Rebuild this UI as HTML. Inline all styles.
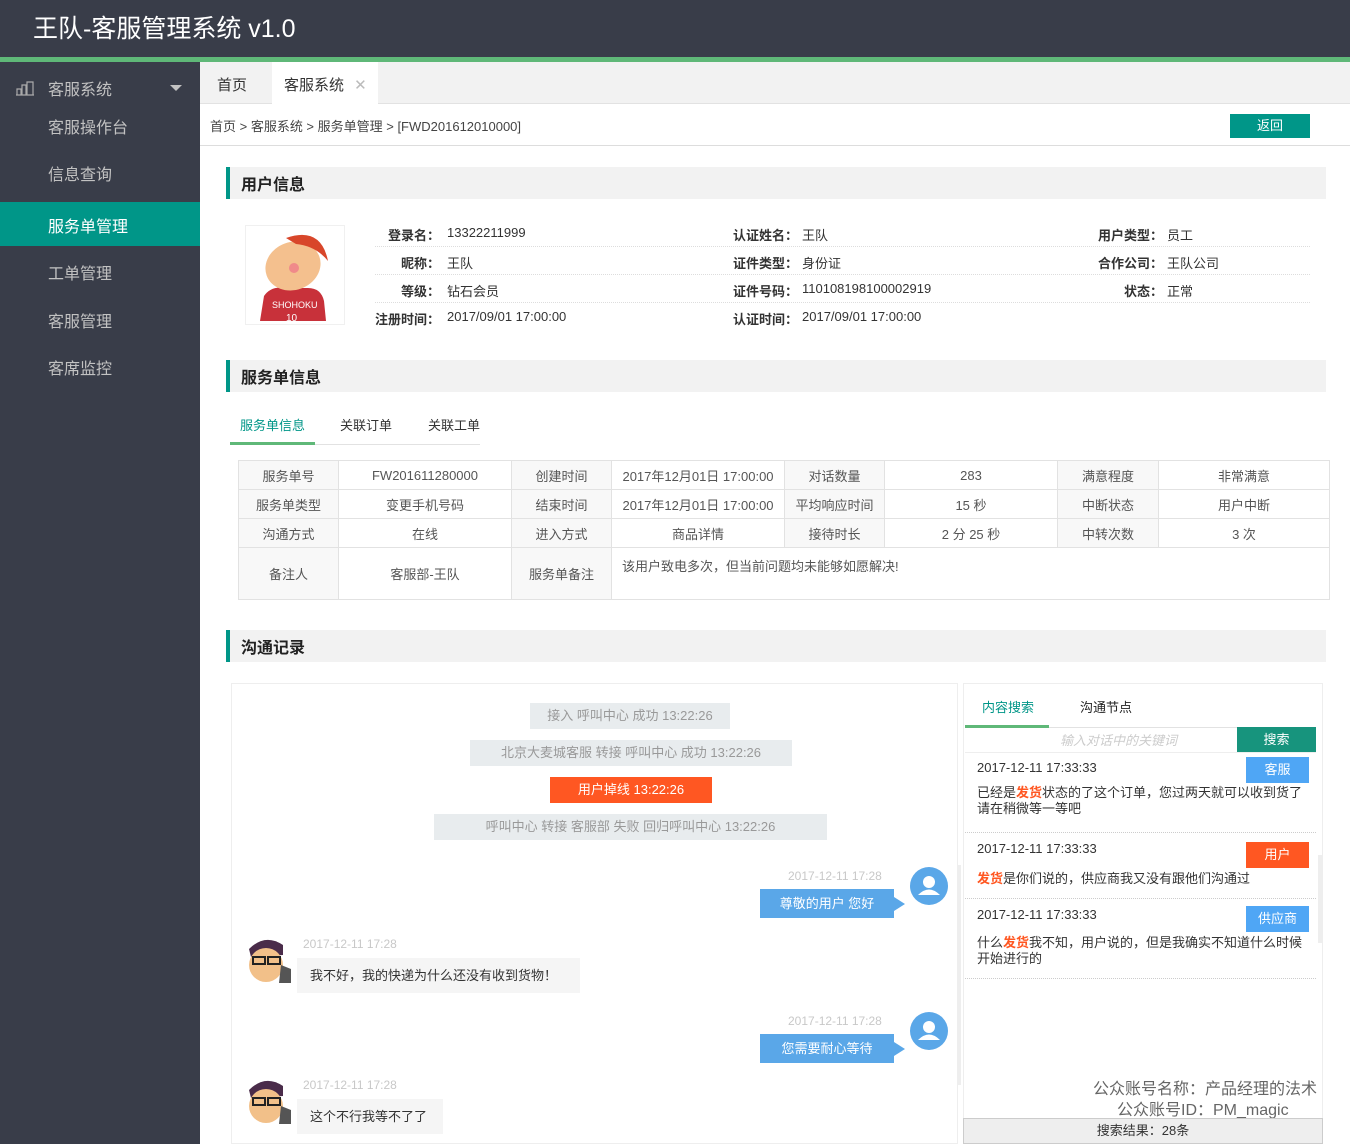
<!DOCTYPE html>
<html><head><meta charset="utf-8"><style>
*{margin:0;padding:0;box-sizing:border-box}
body{width:1350px;height:1144px;overflow:hidden;background:#fff;font-family:"Liberation Sans","Noto Sans CJK SC",sans-serif;font-size:13px;color:#333;position:relative}
.a{position:absolute}
.hdr{left:0;top:0;width:1350px;height:57px;background:#393d49;color:#fff;font-size:25px;padding:9px 0 0 33px}
.gl{left:0;top:57px;width:1350px;height:5px;background:#5fb878}
.side{left:0;top:62px;width:200px;height:1082px;background:#393d49}
.act{left:0;top:202px;width:200px;height:44px;background:#009688}
.tabs{left:200px;top:62px;width:1150px;height:42px;background:#f2f2f2;border-bottom:1px solid #e2e2e2}
.sec{left:226px;width:1100px;height:32px;background:#f2f2f2;border-left:4px solid #009688;font-size:16px;font-weight:bold;padding:4px 0 0 11px;color:#222}
.lb{font-weight:bold}
.row{left:375px;width:935px;border-bottom:1px dotted #ddd;height:28px}
.r{position:absolute;white-space:nowrap}
table{border-collapse:collapse;position:absolute;left:238px;top:460px;width:1092px;font-size:13px;color:#555}
td{border:1px solid #e2e2e2;text-align:center;height:29px}
td.g{background:#f8f8f8}
.pill{position:absolute;background:#e8ecee;color:#999;text-align:center;height:26px;line-height:26px;font-size:13px}
.tm{position:absolute;color:#c8c8c8;font-size:12px}
.bb{position:absolute;background:#5aa7e8;color:#fff;height:29px;line-height:29px;text-align:center;font-size:13px}
.bb:after{content:"";position:absolute;right:-11px;top:8px;border-left:11px solid #5aa7e8;border-top:7px solid transparent;border-bottom:7px solid transparent}
.lbub{position:absolute;background:#f5f5f5;color:#333;height:35px;line-height:35px;padding-left:13px;font-size:13px}
.badge{position:absolute;left:1246px;width:63px;height:26px;line-height:26px;color:#fff;text-align:center;font-size:13px}
.it{position:absolute;left:965px;width:351px;border-bottom:1px dotted #ccc}
.it .d{position:absolute;left:12px;top:8px;font-size:13px}
.it .t{position:absolute;left:12px;top:33px;width:335px;font-size:13px;line-height:16px}
.o{color:#ff5722;font-weight:bold}
</style></head><body>
<div class="a hdr">王队-客服管理系统 v1.0</div>
<div class="a gl"></div>
<div class="a side"></div>
<div class="a act"></div>
<svg class="a" style="left:15px;top:80px" width="20" height="16"><path d="M1 15 H19 M2 15 V9 H6 V15 M7 15 V5 H11 V15 M12 15 V2 H18 V15" fill="none" stroke="#aaa" stroke-width="1.2"/></svg>
<div class="a" style="left:48px;top:76px;color:#c2c2c2;font-size:16px">客服系统</div>
<div class="a" style="left:170px;top:85px;border-top:6px solid #c2c2c2;border-left:6px solid transparent;border-right:6px solid transparent"></div>
<div class="a" style="left:48px;top:114px;color:#c2c2c2;font-size:16px">客服操作台</div>
<div class="a" style="left:48px;top:161px;color:#c2c2c2;font-size:16px">信息查询</div>
<div class="a" style="left:48px;top:213px;color:#fff;font-size:16px">服务单管理</div>
<div class="a" style="left:48px;top:260px;color:#c2c2c2;font-size:16px">工单管理</div>
<div class="a" style="left:48px;top:308px;color:#c2c2c2;font-size:16px">客服管理</div>
<div class="a" style="left:48px;top:355px;color:#c2c2c2;font-size:16px">客席监控</div>

<div class="a tabs"></div>
<div class="a" style="left:217px;top:74px;font-size:15px">首页</div>
<div class="a" style="left:272px;top:62px;width:106px;height:43px;background:#fff"></div>
<div class="a" style="left:284px;top:74px;font-size:15px">客服系统 <span style="color:#bbb;margin-left:6px">✕</span></div>
<div class="a" style="left:200px;top:104px;width:1150px;height:42px;border-bottom:1px solid #ddd"></div>
<div class="a" style="left:210px;top:116px;font-size:13px;color:#444">首页 &gt; 客服系统 &gt; 服务单管理 &gt; [FWD201612010000]</div>
<div class="a" style="left:1230px;top:114px;width:80px;height:24px;background:#009688;color:#fff;text-align:center;line-height:24px;font-size:13px">返回</div>

<div class="a sec" style="top:167px">用户信息</div>
<div class="a" style="left:245px;top:225px;width:100px;height:100px;border:1px solid #f0f0f0">
<svg width="100" height="100" viewBox="0 0 100 100"><path d="M14 95 L18 70 Q25 60 38 62 L62 62 Q75 62 78 75 L80 95Z" fill="#c8313a"/><text x="26" y="82" font-size="9" fill="#fff" font-family="Liberation Sans">SHOHOKU</text><text x="40" y="95" font-size="10" fill="#fff">10</text><ellipse cx="47" cy="40" rx="28" ry="24" fill="#f4c08e" transform="rotate(-20 47 40)"/><path d="M40 12 Q75 0 82 35 Q70 20 50 18Z" fill="#d8462a"/><circle cx="48" cy="42" r="5" fill="#f08a8a"/></svg></div>
<div class="a row" style="top:219px"></div>
<div class="a row" style="top:247px"></div>
<div class="a row" style="top:275px"></div>
<div class="a" style="left:375px;top:219px;width:935px;height:112px">
<div class="r" style="right:870px;top:6px"><span class="lb">登录名：</span></div><div class="r" style="left:72px;top:6px">13322211999</div>
<div class="r" style="right:870px;top:34px"><span class="lb">昵称：</span></div><div class="r" style="left:72px;top:34px">王队</div>
<div class="r" style="right:870px;top:62px"><span class="lb">等级：</span></div><div class="r" style="left:72px;top:62px">钻石会员</div>
<div class="r" style="right:870px;top:90px"><span class="lb">注册时间：</span></div><div class="r" style="left:72px;top:90px">2017/09/01 17:00:00</div>
<div class="r" style="right:512px;top:6px"><span class="lb">认证姓名：</span></div><div class="r" style="left:427px;top:6px">王队</div>
<div class="r" style="right:512px;top:34px"><span class="lb">证件类型：</span></div><div class="r" style="left:427px;top:34px">身份证</div>
<div class="r" style="right:512px;top:62px"><span class="lb">证件号码：</span></div><div class="r" style="left:427px;top:62px">110108198100002919</div>
<div class="r" style="right:512px;top:90px"><span class="lb">认证时间：</span></div><div class="r" style="left:427px;top:90px">2017/09/01 17:00:00</div>
<div class="r" style="right:147px;top:6px"><span class="lb">用户类型：</span></div><div class="r" style="left:792px;top:6px">员工</div>
<div class="r" style="right:147px;top:34px"><span class="lb">合作公司：</span></div><div class="r" style="left:792px;top:34px">王队公司</div>
<div class="r" style="right:147px;top:62px"><span class="lb">状态：</span></div><div class="r" style="left:792px;top:62px">正常</div>
</div>

<div class="a sec" style="top:360px">服务单信息</div>
<div class="a" style="left:230px;top:444px;width:250px;height:1px;background:#e2e2e2"></div>
<div class="a" style="left:230px;top:442px;width:85px;height:3px;background:#5fb878"></div>
<div class="a" style="left:240px;top:415px;color:#009688">服务单信息</div>
<div class="a" style="left:340px;top:415px">关联订单</div>
<div class="a" style="left:428px;top:415px">关联工单</div>
<table>
<colgroup><col style="width:100px"><col style="width:173px"><col style="width:100px"><col style="width:173px"><col style="width:100px"><col style="width:173px"><col style="width:101px"><col></colgroup>
<tr><td class="g">服务单号</td><td>FW201611280000</td><td class="g">创建时间</td><td>2017年12月01日 17:00:00</td><td class="g">对话数量</td><td>283</td><td class="g">满意程度</td><td>非常满意</td></tr>
<tr><td class="g">服务单类型</td><td>变更手机号码</td><td class="g">结束时间</td><td>2017年12月01日 17:00:00</td><td class="g">平均响应时间</td><td>15 秒</td><td class="g">中断状态</td><td>用户中断</td></tr>
<tr><td class="g">沟通方式</td><td>在线</td><td class="g">进入方式</td><td>商品详情</td><td class="g">接待时长</td><td>2 分 25 秒</td><td class="g">中转次数</td><td>3 次</td></tr>
<tr><td class="g" style="height:52px">备注人</td><td>客服部-王队</td><td class="g">服务单备注</td><td colspan="5" style="text-align:left;vertical-align:top;padding:8px 10px">该用户致电多次，但当前问题均未能够如愿解决!</td></tr>
</table>

<div class="a sec" style="top:630px">沟通记录</div>
<div class="a" style="left:231px;top:683px;width:727px;height:461px;border:1px solid #eee"></div>
<div class="pill" style="left:530px;top:703px;width:200px">接入 呼叫中心 成功 13:22:26</div>
<div class="pill" style="left:470px;top:740px;width:322px">北京大麦城客服 转接 呼叫中心 成功 13:22:26</div>
<div class="pill" style="left:550px;top:777px;width:162px;background:#ff5722;color:#fff">用户掉线 13:22:26</div>
<div class="pill" style="left:434px;top:814px;width:393px">呼叫中心 转接 客服部 失败 回归呼叫中心 13:22:26</div>

<div class="tm" style="left:788px;top:869px">2017-12-11 17:28</div>
<div class="bb" style="left:760px;top:889px;width:134px">尊敬的用户 您好</div>
<svg class="a" style="left:909px;top:866px" width="40" height="40"><circle cx="20" cy="20" r="19" fill="#5aa7e8"/><circle cx="20" cy="16" r="6" fill="#fff"/><path d="M9 29 Q20 18 31 29Z" fill="#fff"/></svg>
<svg class="a" style="left:245px;top:935px" width="46" height="48"><path d="M4 14 Q20 -2 38 10 L38 20 L6 22Z" fill="#4a2c4a"/><ellipse cx="21" cy="30" rx="17" ry="17" fill="#f2c089"/><rect x="8" y="22" width="12" height="7" fill="none" stroke="#222" stroke-width="2"/><rect x="23" y="22" width="12" height="7" fill="none" stroke="#222" stroke-width="2"/><path d="M36 30 L46 34 L46 48 L34 48Z" fill="#555"/></svg>
<div class="tm" style="left:303px;top:937px">2017-12-11 17:28</div>
<div class="lbub" style="left:297px;top:958px;width:283px">我不好，我的快递为什么还没有收到货物！</div>

<div class="tm" style="left:788px;top:1014px">2017-12-11 17:28</div>
<div class="bb" style="left:760px;top:1034px;width:134px">您需要耐心等待</div>
<svg class="a" style="left:909px;top:1011px" width="40" height="40"><circle cx="20" cy="20" r="19" fill="#5aa7e8"/><circle cx="20" cy="16" r="6" fill="#fff"/><path d="M9 29 Q20 18 31 29Z" fill="#fff"/></svg>
<svg class="a" style="left:245px;top:1076px" width="46" height="48"><path d="M4 14 Q20 -2 38 10 L38 20 L6 22Z" fill="#4a2c4a"/><ellipse cx="21" cy="30" rx="17" ry="17" fill="#f2c089"/><rect x="8" y="22" width="12" height="7" fill="none" stroke="#222" stroke-width="2"/><rect x="23" y="22" width="12" height="7" fill="none" stroke="#222" stroke-width="2"/><path d="M36 30 L46 34 L46 48 L34 48Z" fill="#555"/></svg>
<div class="tm" style="left:303px;top:1078px">2017-12-11 17:28</div>
<div class="lbub" style="left:297px;top:1099px;width:146px">这个不行我等不了了</div>
<div class="a" style="left:957px;top:865px;width:4px;height:220px;background:#eee"></div>

<div class="a" style="left:963px;top:683px;width:360px;height:461px;border:1px solid #eee"></div>
<div class="a" style="left:982px;top:697px;color:#009688">内容搜索</div>
<div class="a" style="left:1080px;top:697px;color:#222">沟通节点</div>
<div class="a" style="left:965px;top:727px;width:351px;height:1px;background:#e2e2e2"></div>
<div class="a" style="left:965px;top:725px;width:84px;height:3px;background:#5fb878"></div>
<div class="a" style="left:1060px;top:730px;color:#ccc;font-style:italic">输入对话中的关键词</div>
<div class="a" style="left:1237px;top:727px;width:79px;height:25px;background:#17947d;color:#fff;text-align:center;line-height:25px">搜索</div>
<div class="a" style="left:965px;top:752px;width:351px;height:1px;background:#eee"></div>
<div class="it" style="top:752px;height:81px"><div class="d">2017-12-11 17:33:33</div><div class="t">已经是<span class="o">发货</span>状态的了这个订单，您过两天就可以收到货了请在稍微等一等吧</div></div>
<div class="badge" style="top:757px;background:#4fa6f5">客服</div>
<div class="it" style="top:833px;height:66px"><div class="d">2017-12-11 17:33:33</div><div class="t" style="top:38px"><span class="o">发货</span>是你们说的，供应商我又没有跟他们沟通过</div></div>
<div class="badge" style="top:842px;background:#ff5722">用户</div>
<div class="it" style="top:899px;height:80px"><div class="d">2017-12-11 17:33:33</div><div class="t" style="top:36px">什么<span class="o">发货</span>我不知，用户说的，但是我确实不知道什么时候开始进行的</div></div>
<div class="badge" style="top:906px;background:#4fa6f5">供应商</div>
<div class="a" style="left:1318px;top:855px;width:4px;height:88px;background:#eee"></div>
<div class="a" style="left:1093px;top:1075px;font-size:16px;color:#666;white-space:nowrap">公众账号名称：产品经理的法术</div>
<div class="a" style="left:1117px;top:1096px;font-size:16px;color:#666;white-space:nowrap">公众账号ID：PM_magic</div>
<div class="a" style="left:963px;top:1118px;width:360px;height:26px;background:#eee;border:1px solid #ccc;text-align:center;line-height:24px;color:#333">搜索结果：28条</div>
</body></html>
